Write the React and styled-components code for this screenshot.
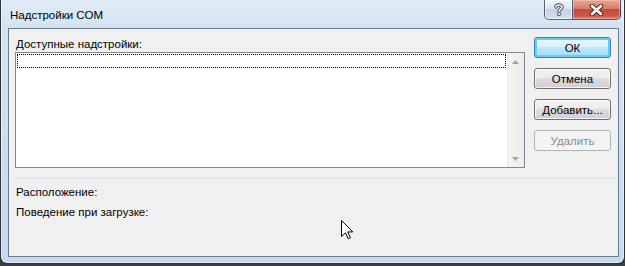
import React from 'react';
import styled, { createGlobalStyle } from 'styled-components';

const GlobalStyle = createGlobalStyle`
  html, body { margin: 0; padding: 0; }
  body {
    width: 625px;
    height: 266px;
    overflow: hidden;
    background: #3b3e42;
    font-family: "Liberation Sans", Arial, sans-serif;
    font-size: 11.5px;
    color: #000;
  }
`;

const Window = styled.div`
  position: relative;
  box-sizing: border-box;
  width: 625px;
  height: 264px;
  display: flex;
  flex-direction: column;
  padding: 0 5px 6px 7px;
  border: 1px solid #2f3337;
  border-top: none;
  border-radius: 0 0 7px 7px;
  background: linear-gradient(180deg, #e1ecf7 0%, #d3e3f3 28px, #c4daf0 100%);
  box-shadow: inset 1px 0 0 rgba(255, 255, 255, 0.55),
    inset -1px 0 0 rgba(255, 255, 255, 0.55),
    inset 0 -1px 0 rgba(255, 255, 255, 0.55);
`;

const TitleBar = styled.div`
  height: 28px;
  display: flex;
  align-items: flex-start;
`;

const Title = styled.div`
  margin: 7px 0 0 2px;
  line-height: 16px;
  color: #000;
`;

const CaptionGroup = styled.div`
  margin-left: auto;
  margin-right: -2px;
  display: flex;
`;

const CaptionButton = styled.div`
  box-sizing: border-box;
  height: 20px;
  display: flex;
  align-items: center;
  justify-content: center;
  border: 1px solid rgba(35, 45, 65, 0.7);
  border-top: none;
`;

const HelpButton = styled(CaptionButton)`
  width: 29px;
  border-radius: 0 0 0 5px;
  background: linear-gradient(180deg, #eef3f9 0%, #dce6f1 45%, #c4d2e3 50%, #d3dfed 100%);
  box-shadow: inset 0 0 0 1px rgba(255, 255, 255, 0.6);
`;

const CloseButton = styled(CaptionButton)`
  width: 48px;
  border-left: none;
  border-radius: 0 0 5px 0;
  background: linear-gradient(180deg, #e8a594 0%, #d77d6b 45%, #c4493a 50%, #cb5c47 85%, #dc8a72 100%);
  box-shadow: inset 0 0 0 1px rgba(255, 210, 200, 0.45);
`;

const Client = styled.div`
  flex: 1;
  display: flex;
  flex-direction: column;
  background: #f0f0f0;
  border: 1px solid #6d7a88;
  padding: 8px 7px 0 6px;
`;

const TopRow = styled.div`
  display: flex;
  gap: 9px;
`;

const ListColumn = styled.div`
  flex: 1;
  display: flex;
  flex-direction: column;
`;

const Label = styled.div`
  height: 15px;
  line-height: 14px;
  padding-left: 1px;
`;

const ListBox = styled.div`
  box-sizing: border-box;
  height: 116px;
  display: flex;
  border: 1px solid #828790;
  background: #fff;
`;

const ListContent = styled.div`
  flex: 1;
  padding: 1px 1px 0 1px;
`;

const FocusRow = styled.div`
  box-sizing: border-box;
  height: 14px;
  border: 1px dotted #000;
`;

const Scrollbar = styled.div`
  width: 17px;
  display: flex;
  flex-direction: column;
  justify-content: space-between;
  background: linear-gradient(90deg, #e6e6e6 0px, #f3f3f3 2px, #eeeeee 100%);
`;

const ScrollArrow = styled.div`
  height: 17px;
  display: flex;
  align-items: center;
  justify-content: center;
`;

const ButtonColumn = styled.div`
  width: 77px;
  display: flex;
  flex-direction: column;
  gap: 10px;
`;

const Button = styled.button`
  box-sizing: border-box;
  height: 21px;
  padding: 0;
  font: inherit;
  color: ${p => (p.disabled ? '#8b8b8b' : '#000')};
  border: 1px solid ${p => (p.$default ? '#3c7fb1' : p.disabled ? '#adb2b5' : '#707070')};
  border-radius: 3px;
  background: ${p =>
    p.disabled
      ? '#f4f4f4'
      : p.$default
      ? 'linear-gradient(180deg, #eaf6fd 0%, #d9f0fc 50%, #bee6fd 50%, #a7d9f5 100%)'
      : 'linear-gradient(180deg, #f2f2f2 0%, #ebebeb 50%, #dddddd 50%, #cfcfcf 100%)'};
  box-shadow: ${p =>
    p.disabled
      ? 'none'
      : p.$default
      ? 'inset 0 0 0 2px #5fd0f0'
      : 'inset 0 0 0 1px rgba(255, 255, 255, 0.75)'};
  line-height: 18px;
`;

const Separator = styled.div`
  height: 1px;
  margin: 10px -2px 3px 0;
  background: #d5dfe6;
`;

const InfoRow = styled.div`
  height: 20px;
  line-height: 20px;
  padding-left: 1px;
`;

const Cursor = styled.svg`
  position: absolute;
  left: 340px;
  top: 220px;
`;

const Up = () => (
  <svg width="7" height="4" viewBox="0 0 7 4">
    <path d="M3.5 0 L7 4 L0 4 Z" fill="#a3a3a3" />
  </svg>
);

const Down = () => (
  <svg width="7" height="4" viewBox="0 0 7 4">
    <path d="M0 0 L7 0 L3.5 4 Z" fill="#a3a3a3" />
  </svg>
);

export default function App() {
  return (
    <>
      <GlobalStyle />
      <Window>
        <TitleBar>
          <Title>Надстройки COM</Title>
          <CaptionGroup>
            <HelpButton>
              <svg width="10" height="13" viewBox="0 0 10 13">
                <path
                  d="M2 4 C2 1.5 8 1.2 8 4 C8 6 5 6 5 8.2 M5 10.2 L5 11.6"
                  fill="none"
                  stroke="#3d4a5c"
                  strokeWidth="3.4"
                  strokeLinecap="round"
                />
                <path
                  d="M2 4 C2 1.5 8 1.2 8 4 C8 6 5 6 5 8.2 M5 10.2 L5 11.6"
                  fill="none"
                  stroke="#fff"
                  strokeWidth="1.6"
                  strokeLinecap="round"
                />
              </svg>
            </HelpButton>
            <CloseButton>
              <svg width="15" height="12" viewBox="0 0 15 12">
                <path d="M3 2 L12 10 M12 2 L3 10" stroke="#5b2a25" strokeWidth="4.6" strokeLinecap="round" />
                <path d="M3 2 L12 10 M12 2 L3 10" stroke="#fff" strokeWidth="2.6" strokeLinecap="round" />
              </svg>
            </CloseButton>
          </CaptionGroup>
        </TitleBar>
        <Client>
          <TopRow>
            <ListColumn>
              <Label>
                <u>Д</u>оступные надстройки:
              </Label>
              <ListBox>
                <ListContent>
                  <FocusRow />
                </ListContent>
                <Scrollbar>
                  <ScrollArrow>
                    <Up />
                  </ScrollArrow>
                  <ScrollArrow>
                    <Down />
                  </ScrollArrow>
                </Scrollbar>
              </ListBox>
            </ListColumn>
            <ButtonColumn>
              <Button $default>ОК</Button>
              <Button>Отмена</Button>
              <Button>
                <u>Д</u>обавить...
              </Button>
              <Button disabled>Удалить</Button>
            </ButtonColumn>
          </TopRow>
          <Separator />
          <InfoRow>Расположение:</InfoRow>
          <InfoRow>Поведение при загрузке:</InfoRow>
        </Client>
        <Cursor width="13" height="20" viewBox="0 0 13 20">
          <path
            d="M0.5 0.5 L0.5 16.5 L4.5 12.8 L7.2 18.8 L9.4 17.8 L6.8 11.9 L11.8 11.9 Z"
            fill="#fff"
            stroke="#000"
            strokeWidth="1"
            strokeLinejoin="miter"
          />
        </Cursor>
      </Window>
    </>
  );
}
